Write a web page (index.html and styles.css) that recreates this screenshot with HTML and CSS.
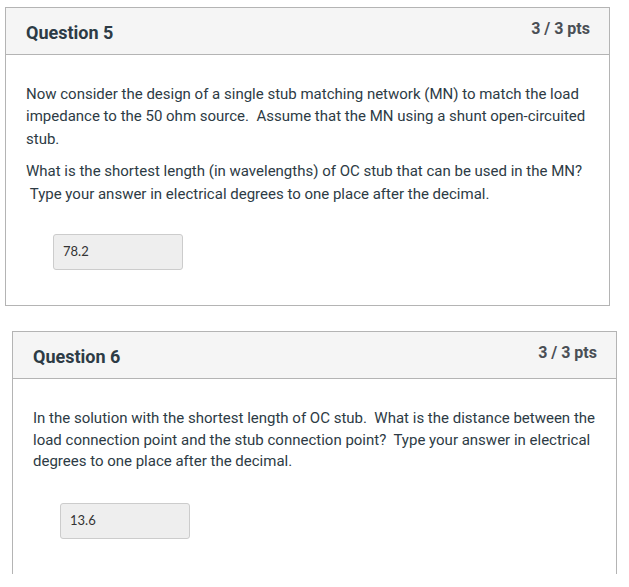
FILE: index.html
```html
<!DOCTYPE html>
<html>
<head>
<meta charset="utf-8">
<link rel="stylesheet" href="styles.css">
</head>
<body>
<div class="page">
  <div class="card card-one">
    <div class="head">
      <div class="title">Question 5</div>
      <div class="pts">3 / 3 pts</div>
    </div>
    <div class="body">
      <p>Now consider the design of a single stub matching network (MN) to match the load impedance to the 50 ohm source.&nbsp; Assume that the MN using a shunt open-circuited stub.</p>
      <p>What is the shortest length (in wavelengths) of OC stub that can be used in the MN? &nbsp;Type your answer in electrical degrees to one place after the decimal.</p>
      <div class="answer">78.2</div>
    </div>
  </div>
  <div class="card card-two">
    <div class="head">
      <div class="title">Question 6</div>
      <div class="pts">3 / 3 pts</div>
    </div>
    <div class="body">
      <p>In the solution with the shortest length of OC stub.&nbsp; What is the distance between the load connection point and the stub connection point?&nbsp; Type your answer in electrical degrees to one place after the decimal.</p>
      <div class="answer">13.6</div>
    </div>
  </div>
</div>
</body>
</html>
```
FILE: styles.css
```css
html, body {
  margin: 0;
  padding: 0;
  background: #fff;
}
.page {
  width: 629px;
  height: 587px;
  overflow: hidden;
  font-family: Roboto, "Liberation Sans", sans-serif;
  color: #2d3b45;
}
.card {
  border: 1px solid #b4b4b4;
  box-sizing: border-box;
  background: #fff;
}
.card-one {
  margin: 7px 0 0 5px;
  width: 605px;
  height: 299px;
}
.card-two {
  margin: 25px 0 0 12px;
  width: 605px;
  height: 243px;
  border-bottom: none;
}
.head {
  background: #f5f5f5;
  border-bottom: 1px solid #b4b4b4;
  height: 47px;
  box-sizing: border-box;
  display: flex;
  justify-content: space-between;
  padding: 0 19px 0 20px;
}
.title {
  font-size: 18px;
  font-weight: bold;
  margin-top: 15px;
  line-height: 20px;
}
.pts {
  font-size: 16px;
  font-weight: bold;
  color: #4a4f55;
  margin-top: 11px;
  line-height: 20px;
}
.body {
  padding: 28px 20px 0 20px;
}
.card-two .body {
  padding-top: 29px;
}
.body p {
  margin: 0 0 10.5px 0;
  font-size: 15px;
  line-height: 22.3px;
}
.card-two .body p {
  line-height: 21.6px;
}
.answer {
  margin: 29px 0 0 27px;
  width: 130px;
  height: 36px;
  box-sizing: border-box;
  background: #eeeeee;
  border: 1px solid #cccccc;
  border-radius: 3px;
  font-family: Lato, "Liberation Sans", sans-serif;
  font-size: 13px;
  color: #333;
  padding: 8px 0 0 9px;
}
.card-two .answer {
  margin-top: 30.5px;
}
```
